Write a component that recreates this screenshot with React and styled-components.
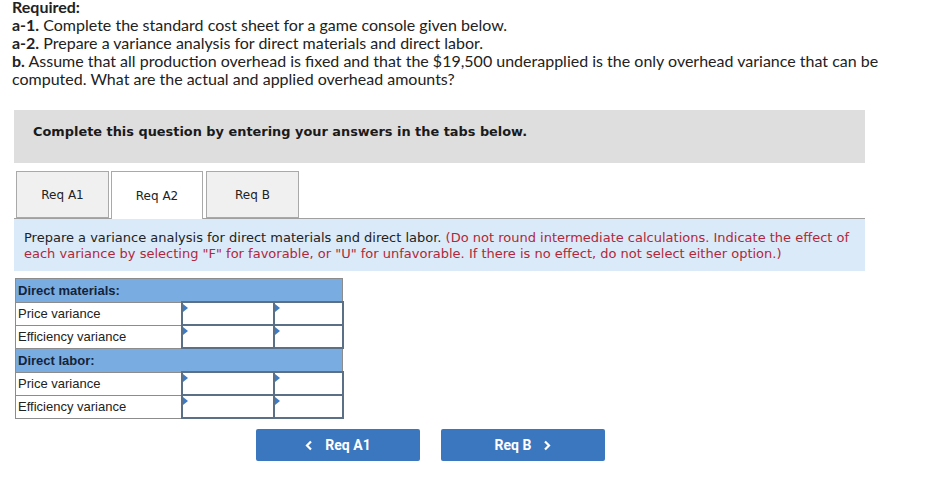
import React from "react";
import styled, { createGlobalStyle } from "styled-components";

const Global = createGlobalStyle`
  html, body { margin: 0; padding: 0; background: #fff; }
  body { font-family: Lato, "Open Sans", sans-serif; }
`;

const Page = styled.div`
  width: 934px;
  height: 480px;
  overflow: hidden;
  box-sizing: border-box;
`;

const Intro = styled.div`
  padding-left: 12px;
  margin-top: -2px;
  font-family: Lato, sans-serif;
  font-size: 16px;
  line-height: 18px;
  color: #222;
  width: 890px;
`;

const Line = styled.div``;

const B = styled.b`
  font-weight: 700;
`;

const Banner = styled.div`
  margin: 22px 0 0 14px;
  width: 851px;
  height: 53px;
  background: #dedede;
  box-sizing: border-box;
  padding: 14px 0 0 19px;
  font-family: "DejaVu Sans", Verdana, sans-serif;
  font-weight: 700;
  font-size: 12.9px;
  line-height: 16px;
  color: #1a1a1a;
`;

const TabBar = styled.div`
  margin: 8px 0 0 16px;
  display: flex;
  gap: 2px;
  height: 47px;
  align-items: flex-end;
`;

const Tab = styled.div`
  width: ${(p) => (p.$active ? "92px" : "93px")};
  height: ${(p) => (p.$active ? "48px" : "47px")};
  margin-bottom: ${(p) => (p.$active ? "-1px" : "0")};
  margin-right: ${(p) => (p.$gapAfter ? "1px" : "0")};
  box-sizing: border-box;
  border: 1px solid #a9a9a9;
  border-bottom: ${(p) => (p.$active ? "none" : "1px solid #a9a9a9")};
  background: ${(p) => (p.$active ? "#ffffff" : "#f0f0f0")};
  display: flex;
  align-items: center;
  justify-content: center;
  font-family: "DejaVu Sans", Verdana, sans-serif;
  font-size: 12px;
  color: #222;
  position: relative;
  z-index: 1;
`;

const Instruction = styled.div`
  margin-left: 14px;
  width: 851px;
  height: 53px;
  box-sizing: border-box;
  background: #dbeaf8;
  border-top: 1px solid #a0a0a0;
  padding: 11px 8px 0 10px;
  font-family: "DejaVu Sans", Verdana, sans-serif;
  font-size: 13px;
  line-height: 16px;
  color: #222;
`;

const Red = styled.span`
  color: #b0283a;
`;

const Table = styled.table`
  margin: 7px 0 0 15px;
  border-collapse: collapse;
  table-layout: fixed;
  width: 327px;
  font-family: "Liberation Sans", Arial, sans-serif;
  font-size: 13px;
  color: #222;
  border: 1px solid #8c8c8c;
`;

const Col = styled.col`
  width: ${(p) => p.$w}px;
`;

const HeadCell = styled.td`
  background: #79ade2;
  color: #14233a;
  font-weight: 700;
  height: 22px;
  padding: 0 0 0 2px;
  border-bottom: 1px solid #8c8c8c;
`;

const Label = styled.td`
  height: 22px;
  padding: 0 0 0 2px;
  background: #fff;
  border-bottom: 1px solid #8c8c8c;
  border-right: 1px solid #8c8c8c;
  white-space: nowrap;
`;

const InputCell = styled.td`
  padding: 0;
  border: 2px solid #5b6f86;
  background: #fff;
  position: relative;
`;

const Flag = styled.span`
  position: absolute;
  left: 0;
  top: 1px;
  width: 0;
  height: 0;
  border-top: 4px solid transparent;
  border-bottom: 4px solid transparent;
  border-left: 5px solid #3d7bc4;
`;

const Nav = styled.div`
  margin: 10px 0 0 256px;
  display: flex;
  gap: 21px;
`;

const NavButton = styled.div`
  width: 164px;
  height: 32px;
  background: #3a77bf;
  border-radius: 2px;
  display: flex;
  align-items: center;
  justify-content: center;
  gap: 12px;
  color: #fff;
  font-family: Roboto, sans-serif;
  font-weight: 700;
  font-size: 14px;
`;

const Chevron = ({ dir }) => (
  <svg width="8" height="11" viewBox="0 0 8 11">
    <path
      d={dir === "left" ? "M6 1.5 L2 5.5 L6 9.5" : "M2 1.5 L6 5.5 L2 9.5"}
      fill="none"
      stroke="#fff"
      strokeWidth="2.2"
    />
  </svg>
);

const rows = [
  { head: "Direct materials:" },
  { label: "Price variance" },
  { label: "Efficiency variance" },
  { head: "Direct labor:" },
  { label: "Price variance" },
  { label: "Efficiency variance" },
];

export default function App() {
  return (
    <Page>
      <Global />
      <Intro>
        <Line><B>Required:</B></Line>
        <Line><B>a-1.</B> Complete the standard cost sheet for a game console given below.</Line>
        <Line><B>a-2.</B> Prepare a variance analysis for direct materials and direct labor.</Line>
        <Line>
          <B>b.</B> Assume that all production overhead is fixed and that the $19,500 underapplied is the only overhead variance that can be
          computed. What are the actual and applied overhead amounts?
        </Line>
      </Intro>
      <Banner>Complete this question by entering your answers in the tabs below.</Banner>
      <TabBar>
        <Tab>Req A1</Tab>
        <Tab $active $gapAfter>Req A2</Tab>
        <Tab>Req B</Tab>
      </TabBar>
      <Instruction>
        Prepare a variance analysis for direct materials and direct labor.{" "}
        <Red>
          (Do not round intermediate calculations. Indicate the effect of each variance by selecting "F" for favorable, or "U" for unfavorable. If there is no effect, do not select either option.)
        </Red>
      </Instruction>
      <Table>
        <colgroup>
          <Col $w={166} />
          <Col $w={92} />
          <Col $w={69} />
        </colgroup>
        <tbody>
          {rows.map((r, i) =>
            r.head ? (
              <tr key={i}>
                <HeadCell colSpan={3}>{r.head}</HeadCell>
              </tr>
            ) : (
              <tr key={i}>
                <Label>{r.label}</Label>
                <InputCell><Flag /></InputCell>
                <InputCell><Flag /></InputCell>
              </tr>
            )
          )}
        </tbody>
      </Table>
      <Nav>
        <NavButton><Chevron dir="left" /> Req A1</NavButton>
        <NavButton>Req B <Chevron dir="right" /></NavButton>
      </Nav>
    </Page>
  );
}
